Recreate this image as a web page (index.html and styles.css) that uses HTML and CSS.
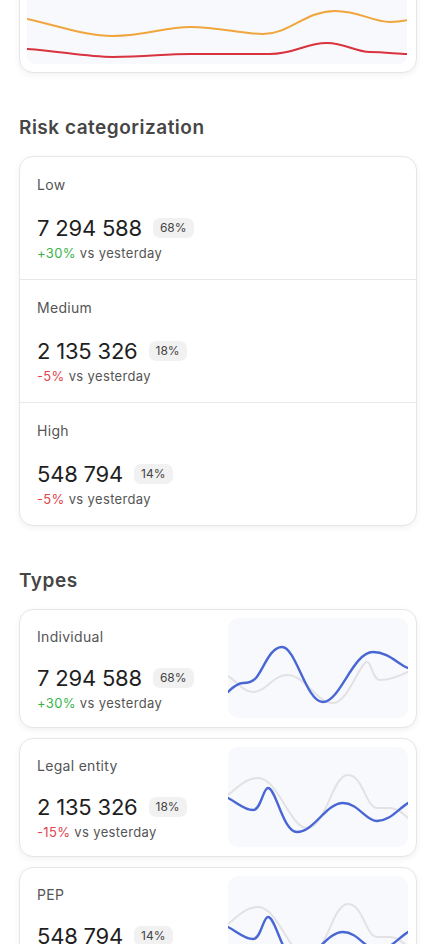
FILE: index.html
```html
<!DOCTYPE html>
<html lang="en">
<head>
<meta charset="utf-8">
<title>Dashboard</title>
<link rel="stylesheet" href="styles.css">
</head>
<body>
<main class="page">
  <section class="card trend-card">
    <div class="trend-chart">
      <svg viewBox="27 -86 381 150" width="381" height="150" preserveAspectRatio="none">
        <path class="ln-orange" d="M27 19 C60 26 85 36 113 36 C145 36 165 27 190 27 C220 27 240 34 263 34 C290 34 305 11 335 11 C360 11 372 22 390 22 C398 22 403 21 408 20"/>
        <path class="ln-red" d="M27 49 C60 51 85 57 113 57 C145 57 165 54 190 54 L270 54 C295 54 305 43 327 43 C345 43 355 52 370 52 C385 52 398 54 408 54"/>
      </svg>
    </div>
  </section>

  <h2 class="section-title">Risk categorization</h2>
  <section class="card risk-card">
    <div class="risk-row">
      <div class="label">Low</div>
      <div class="value-line"><span class="value">7 294 588</span><span class="badge">68%</span></div>
      <div class="delta"><span class="up">+30%</span> vs yesterday</div>
    </div>
    <div class="risk-row">
      <div class="label">Medium</div>
      <div class="value-line"><span class="value">2 135 326</span><span class="badge">18%</span></div>
      <div class="delta"><span class="down">-5%</span> vs yesterday</div>
    </div>
    <div class="risk-row">
      <div class="label">High</div>
      <div class="value-line"><span class="value">548 794</span><span class="badge">14%</span></div>
      <div class="delta"><span class="down">-5%</span> vs yesterday</div>
    </div>
  </section>

  <h2 class="section-title">Types</h2>
  <div class="type-list">
    <section class="card type-card">
      <div class="type-info">
        <div class="label">Individual</div>
        <div class="value-line"><span class="value">7 294 588</span><span class="badge">68%</span></div>
        <div class="delta"><span class="up">+30%</span> vs yesterday</div>
      </div>
      <div class="spark">
        <svg viewBox="0 0 180 100" width="180" height="100">
          <path class="ln-gray" d="M0 58 C10 64 15 74 25 74 C38 74 45 57 59 57 C78 57 88 85 105 85 C120 85 132 44 139 44 C144 44 144 62 152 62 C163 62 172 58 180 54"/>
          <path class="ln-blue" d="M0 74 C6 68 10 65 15 65 C21 65 24 64 28 60 C36 50 42 29 54 29 C68 29 78 84 95 84 C112 84 125 34 145 34 C160 34 170 46 180 50"/>
        </svg>
      </div>
    </section>
    <section class="card type-card">
      <div class="type-info">
        <div class="label">Legal entity</div>
        <div class="value-line"><span class="value">2 135 326</span><span class="badge">18%</span></div>
        <div class="delta"><span class="down">-15%</span> vs yesterday</div>
      </div>
      <div class="spark">
        <svg viewBox="0 0 180 100" width="180" height="100">
          <path class="ln-gray" d="M0 48 C10 40 18 31 30 31 C50 31 62 81 79 81 C98 81 104 28 120 28 C135 28 138 61 149 61 L162 61 C170 61 175 67 180 71"/>
          <path class="ln-blue" d="M0 51 C10 56 16 63 25 63 C33 63 35 41 40 41 C48 41 55 85 69 85 C86 85 98 56 115 56 C130 56 138 74 149 74 C162 74 170 62 180 56"/>
        </svg>
      </div>
    </section>
    <section class="card type-card">
      <div class="type-info">
        <div class="label">PEP</div>
        <div class="value-line"><span class="value">548 794</span><span class="badge">14%</span></div>
        <div class="delta"><span class="down">-5%</span> vs yesterday</div>
      </div>
      <div class="spark">
        <svg viewBox="0 0 180 100" width="180" height="100">
          <path class="ln-gray" d="M0 48 C10 40 18 31 30 31 C50 31 62 81 79 81 C98 81 104 28 120 28 C135 28 138 61 149 61 L162 61 C170 61 175 67 180 71"/>
          <path class="ln-blue" d="M0 51 C10 56 16 63 25 63 C33 63 35 41 40 41 C48 41 55 85 69 85 C86 85 98 56 115 56 C130 56 138 74 149 74 C162 74 170 62 180 56"/>
        </svg>
      </div>
    </section>
  </div>
</main>
</body>
</html>
```

FILE: styles.css
```css
* { box-sizing: border-box; }
html, body { margin: 0; padding: 0; background: #ffffff; }
body {
  font-family: Inter, "Noto Sans", "Liberation Sans", sans-serif;
  color: #222;
  overflow: hidden;
}
.page {
  padding: 0 19px 40px;
}
.card {
  background: #fff;
  border: 1px solid #e6e6e8;
  border-radius: 14px;
  box-shadow: 0 2px 6px rgba(0, 0, 0, 0.06);
}
.trend-card {
  margin-top: -95px;
  padding: 8px 9px 8px 7px;
}
.trend-chart {
  height: 150px;
  background: #f8f9fc;
  border-radius: 8px;
  overflow: hidden;
}
.trend-chart svg { display: block; }
.ln-orange, .ln-red, .ln-blue, .ln-gray {
  fill: none;
  stroke-linecap: round;
  stroke-linejoin: round;
}
.ln-orange { stroke: #f0a63c; stroke-width: 2; }
.ln-red { stroke: #d8333f; stroke-width: 2; }
.ln-blue { stroke: #4866d4; stroke-width: 2.4; }
.ln-gray { stroke: #e2e2e4; stroke-width: 2; }

.section-title {
  margin: 43px 0 16px;
  font-size: 19px;
  line-height: 24px;
  font-weight: 600;
  letter-spacing: 0.5px;
  color: #464646;
}
.risk-card { overflow: hidden; }
.risk-row {
  padding: 18px 17px 17px;
  border-top: 1px solid #e8e8ea;
}
.risk-row:first-child { border-top: none; }

.label {
  font-size: 14px;
  line-height: 20px;
  letter-spacing: 0.3px;
  color: #555;
}
.value-line {
  display: flex;
  align-items: center;
  gap: 11px;
  margin-top: 19px;
  height: 28px;
}
.value {
  font-size: 22px;
  line-height: 28px;
  color: #1f1f1f;
  font-weight: 400;
  letter-spacing: -0.2px;
}
.badge {
  font-size: 12px;
  line-height: 20px;
  padding: 0 7px;
  background: #f1f1f2;
  border-radius: 7px;
  color: #444;
}
.delta {
  margin-top: 2px;
  font-size: 13px;
  line-height: 18px;
  letter-spacing: 0.35px;
  color: #555;
}
.up { color: #3bb34a; }
.down { color: #e0464f; }

.type-list {
  display: flex;
  flex-direction: column;
  gap: 10px;
}
.type-card {
  display: flex;
  justify-content: space-between;
  height: 119px;
  padding: 8px 8px 8px 0;
}
.type-info {
  padding: 9px 0 0 17px;
}
.type-card .value-line { margin-top: 17px; }
.spark {
  width: 180px;
  height: 100px;
  background: #f8f9fc;
  border-radius: 10px;
  overflow: hidden;
}
.spark svg { display: block; }
```
